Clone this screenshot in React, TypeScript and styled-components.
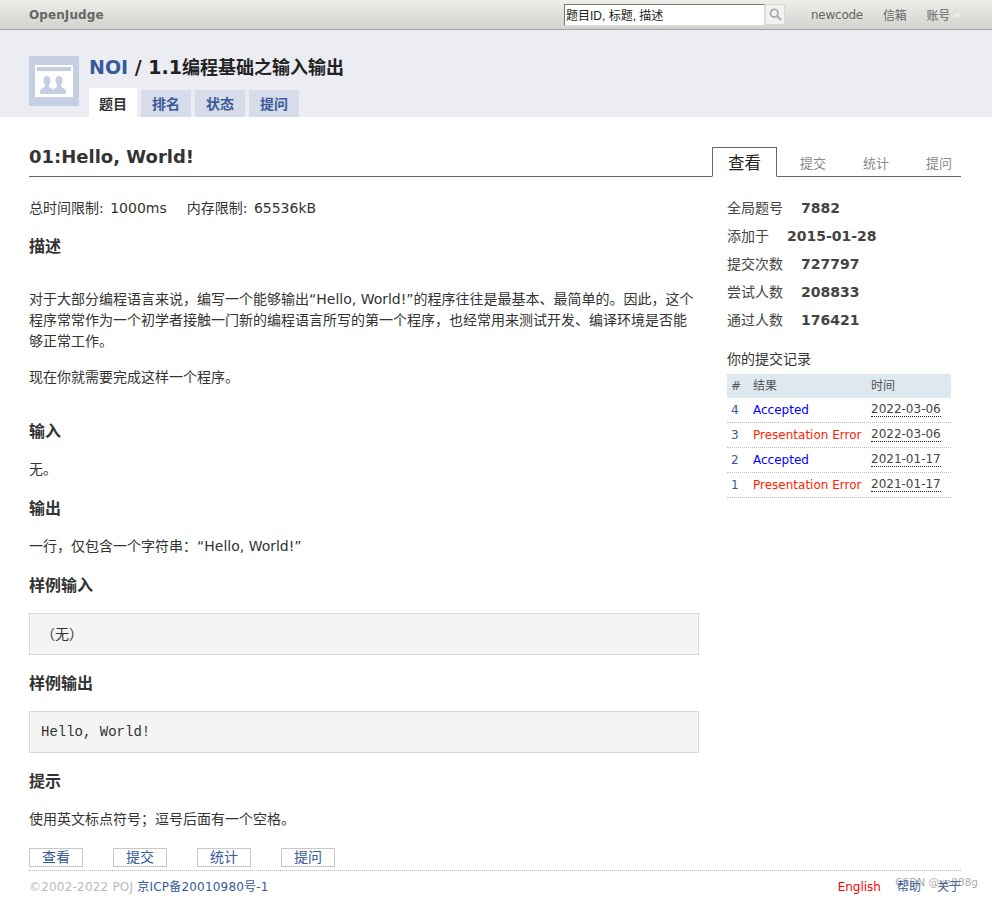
import styled, { createGlobalStyle } from "styled-components"

const GlobalStyle = createGlobalStyle`
  html, body {
    margin: 0;
    padding: 0;
    background: #fff;
  }
  body {
    font-family: "DejaVu Sans", "Noto Sans CJK SC", sans-serif;
    font-size: 14px;
    color: #333;
  }
  a {
    text-decoration: none;
  }
`

const Page = styled.div`
  position: relative;
  width: 992px;
  height: 898px;
  overflow: hidden;
`

const TopBar = styled.div`
  box-sizing: border-box;
  height: 30px;
  padding-left: 29px;
  display: flex;
  align-items: center;
  background: linear-gradient(#efefea, #d2d2ce);
  border-bottom: 1px solid #a3a3a3;
`

const Brand = styled.a`
  font-size: 12px;
  font-weight: bold;
  letter-spacing: 0.1px;
  color: #666;
  width: 535px;
`

const SearchInput = styled.div`
  box-sizing: border-box;
  width: 201px;
  height: 22px;
  line-height: 23px;
  padding-left: 1px;
  background: #fff;
  border: 1px solid #777;
  border-right-color: #ddd;
  border-bottom-color: #ddd;
  color: #222;
  font-family: "Liberation Sans", "Noto Sans CJK SC", sans-serif;
  font-size: 12px;
  white-space: nowrap;
  overflow: hidden;
`

const SearchButton = styled.div`
  box-sizing: border-box;
  width: 20px;
  height: 21px;
  display: flex;
  align-items: center;
  justify-content: center;
  background: #f2f2f0;
  border: 1px solid #d8d8d8;
  margin-right: 26px;
`

const UserLink = styled.a`
  font-size: 12px;
  letter-spacing: -0.25px;
  color: #666;
  margin-right: 20px;
`

const Caret = styled.span`
  display: inline-block;
  width: 0;
  height: 0;
  margin-left: 3px;
  vertical-align: 2px;
  border-left: 4px solid transparent;
  border-right: 4px solid transparent;
  border-top: 4px solid #eee;
`

const Banner = styled.div`
  box-sizing: border-box;
  height: 87px;
  padding: 26px 0 0 29px;
  display: flex;
  gap: 10px;
  background: #ecedf3;
`

const GroupIcon = styled.svg`
  width: 50px;
  height: 50px;
  flex: none;
`

const BannerMain = styled.div`
  display: flex;
  flex-direction: column;
`

const BannerTitle = styled.h2`
  margin: 0;
  height: 32px;
  line-height: 23px;
  font-size: 18px;
  font-weight: bold;
  color: #222;
  a {
    color: #375a9a;
  }
  span {
    font-size: 19px;
  }
`

const NavTabs = styled.div`
  display: flex;
  align-items: flex-end;
  gap: 4px;
`

const NavTab = styled.a<{ $active?: boolean }>`
  height: ${(p) => (p.$active ? 29 : 27)}px;
  line-height: ${(p) => (p.$active ? 33 : 29)}px;
  width: ${(p) => (p.$active ? 48 : 50)}px;
  text-align: center;
  font-size: 14px;
  font-weight: bold;
  color: ${(p) => (p.$active ? "#333" : "#3d5a9a")};
  background: ${(p) => (p.$active ? "#fff" : "#d6dce9")};
`

const TitleRow = styled.div`
  box-sizing: border-box;
  height: 60px;
  margin: 0 31px 0 29px;
  padding-top: 30px;
  display: flex;
  align-items: flex-end;
  justify-content: space-between;
  border-bottom: 1px solid #666;
`

const ProblemTitle = styled.h1`
  margin: 0;
  align-self: flex-start;
  margin-top: -2px;
  line-height: 24px;
  font-size: 18px;
  font-weight: bold;
  color: #333;
`

const PageTabs = styled.div`
  display: flex;
  align-items: flex-end;
  gap: 19px;
  margin-bottom: -1px;
`

const PageTab = styled.a<{ $active?: boolean }>`
  box-sizing: border-box;
  height: 30px;
  text-align: center;
  width: ${(p) => (p.$active ? "65px" : "44px")};
  margin-right: ${(p) => (p.$active ? "-5px" : "0")};
  font-size: ${(p) => (p.$active ? "16.5px" : "13px")};
  line-height: ${(p) => (p.$active ? "32px" : "33px")};
  color: ${(p) => (p.$active ? "#222" : "#888")};
  background: ${(p) => (p.$active ? "#fff" : "transparent")};
  border: ${(p) => (p.$active ? "1px solid #666" : "none")};
  border-bottom: ${(p) => (p.$active ? "1px solid #fff" : "none")};
`

const Columns = styled.div`
  display: flex;
  padding-left: 29px;
`

const MainColumn = styled.div`
  width: 670px;
  flex: none;
`

const Limits = styled.div`
  display: flex;
  gap: 20px;
  margin-top: 22px;
  line-height: 18px;
  word-spacing: 2px;
`

const SectionTitle = styled.h3<{ $top: number; $bottom: number }>`
  margin: ${(p) => p.$top}px 0 ${(p) => p.$bottom}px;
  line-height: 24px;
  font-size: 16px;
  font-weight: bold;
  color: #333;
`

const Paragraph = styled.p<{ $top?: number }>`
  margin: ${(p) => p.$top ?? 0}px 0 0;
  line-height: 21px;
  color: #333;
`

const SampleBox = styled.div<{ $mono?: boolean }>`
  box-sizing: border-box;
  height: 42px;
  padding: 0 11px;
  line-height: 40px;
  background: #f4f4f4;
  border: 1px solid #d9d9d9;
  color: #333;
  font-family: ${(p) =>
    p.$mono ? '"Liberation Mono", monospace' : "inherit"};
  font-size: 14px;
`

const BottomActions = styled.div`
  display: flex;
  gap: 30px;
  margin-top: 18px;
`

const ActionButton = styled.a`
  box-sizing: border-box;
  width: 54px;
  height: 19px;
  line-height: 17px;
  text-align: center;
  font-size: 14px;
  color: #375a9a;
  border: 1px solid #c8c8c8;
`

const SideColumn = styled.div`
  width: 224px;
  margin-left: 28px;
  padding-top: 17px;
`

const Fact = styled.div`
  display: flex;
  gap: 18px;
  height: 28px;
  line-height: 28px;
  color: #444;
`

const FactValue = styled.b`
  font-size: 14px;
  color: #444;
`

const RecordsTitle = styled.div`
  margin-top: 15px;
  line-height: 20px;
  color: #333;
`

const RecordsTable = styled.div`
  margin-top: 5px;
  font-size: 12px;
`

const RecordRow = styled.div<{ $head?: boolean }>`
  display: grid;
  grid-template-columns: 22px 118px 80px;
  height: ${(p) => (p.$head ? "24px" : "25px")};
  box-sizing: border-box;
  line-height: 24px;
  padding-left: 4px;
  background: ${(p) => (p.$head ? "#dee8ef" : "transparent")};
  color: ${(p) => (p.$head ? "#555" : "#375a9a")};
  border-bottom: ${(p) => (p.$head ? "none" : "1px dotted #bbb")};
`

const Verdict = styled.a<{ $ok: boolean }>`
  color: ${(p) => (p.$ok ? "#0000ff" : "#ff2200")};
  white-space: nowrap;
`

const DateText = styled.span`
  justify-self: start;
  height: 14px;
  line-height: 14px;
  margin-top: 4px;
  color: #444;
  border-bottom: 1px dotted #222;
`

const Footer = styled.div`
  box-sizing: border-box;
  margin: 3px 31px 0 29px;
  height: 28px;
  display: flex;
  justify-content: space-between;
  line-height: 32px;
  font-size: 12px;
  color: #bbb;
  border-top: 1px dotted #bbb;
`

const Copyright = styled.span`
  letter-spacing: 0.2px;
`

const FooterLink = styled.a<{ $red?: boolean }>`
  color: ${(p) => (p.$red ? "#f00" : "#375a9a")};
`

const FooterLinks = styled.span`
  display: flex;
  gap: 16px;
`

const Watermark = styled.div`
  position: absolute;
  right: 14px;
  bottom: 9px;
  font-size: 10.5px;
  line-height: 14px;
  color: rgba(120, 120, 120, 0.65);
`

const facts = [
  { label: "全局题号", value: "7882" },
  { label: "添加于", value: "2015-01-28" },
  { label: "提交次数", value: "727797" },
  { label: "尝试人数", value: "208833" },
  { label: "通过人数", value: "176421" },
]

const records = [
  { id: 4, result: "Accepted", date: "2022-03-06" },
  { id: 3, result: "Presentation Error", date: "2022-03-06" },
  { id: 2, result: "Accepted", date: "2021-01-17" },
  { id: 1, result: "Presentation Error", date: "2021-01-17" },
]

export default function App() {
  return (
    <Page>
      <GlobalStyle />
      <TopBar>
        <Brand>OpenJudge</Brand>
        <SearchInput>题目ID, 标题, 描述</SearchInput>
        <SearchButton>
          <svg width="13" height="13" viewBox="0 0 13 13" fill="none">
            <circle cx="5.2" cy="5.2" r="3.8" stroke="#aaa" strokeWidth="1.8" />
            <path d="M8 8l4 4" stroke="#aaa" strokeWidth="2.2" />
          </svg>
        </SearchButton>
        <UserLink>newcode</UserLink>
        <UserLink>信箱</UserLink>
        <UserLink>
          账号
          <Caret />
        </UserLink>
      </TopBar>
      <Banner>
        <GroupIcon viewBox="0 0 50 50">
          <rect width="50" height="50" fill="#c5cfe2" />
          <rect x="6" y="9" width="38" height="32" fill="#fff" />
          <rect x="8" y="11" width="34" height="4" fill="#c5cfe2" />
          <path
            d="M11 38v-3c0-2 4-3 5-4.500v-2c-1-1-1.500-2.500-1.500-4.500 0-2.500 1.500-4 3.500-4s3.500 1.500 3.500 4c0 2-.5 3.500-1.500 4.500v2c1 1.500 3 2 4 3 1-1 3-1.500 4-3v-2c-1-1-1.500-2.500-1.500-4.500 0-2.500 1.500-4 3.500-4s3.500 1.500 3.500 4c0 2-.5 3.500-1.500 4.500v2c1 1.500 5 2.500 5 4.500v3z"
            fill="#c5cfe2"
          />
        </GroupIcon>
        <BannerMain>
          <BannerTitle>
            <span>
              <a>NOI</a> / 1.1
            </span>
            编程基础之输入输出
          </BannerTitle>
          <NavTabs>
            <NavTab $active>题目</NavTab>
            <NavTab>排名</NavTab>
            <NavTab>状态</NavTab>
            <NavTab>提问</NavTab>
          </NavTabs>
        </BannerMain>
      </Banner>
      <TitleRow>
        <ProblemTitle>01:Hello, World!</ProblemTitle>
        <PageTabs>
          <PageTab $active>查看</PageTab>
          <PageTab>提交</PageTab>
          <PageTab>统计</PageTab>
          <PageTab>提问</PageTab>
        </PageTabs>
      </TitleRow>
      <Columns>
        <MainColumn>
          <Limits>
            <span>总时间限制: 1000ms</span>
            <span>内存限制: 65536kB</span>
          </Limits>
          <SectionTitle $top={18} $bottom={30}>
            描述
          </SectionTitle>
          <Paragraph>
            对于大部分编程语言来说，编写一个能够输出“Hello,
            World!”的程序往往是最基本、最简单的。因此，这个程序常常作为一个初学者接触一门新的编程语言所写的第一个程序，也经常用来测试开发、编译环境是否能够正常工作。
          </Paragraph>
          <Paragraph $top={15}>现在你就需要完成这样一个程序。</Paragraph>
          <SectionTitle $top={32} $bottom={15}>
            输入
          </SectionTitle>
          <Paragraph>无。</Paragraph>
          <SectionTitle $top={17} $bottom={15}>
            输出
          </SectionTitle>
          <Paragraph>一行，仅包含一个字符串：“Hello, World!”</Paragraph>
          <SectionTitle $top={17} $bottom={15}>
            样例输入
          </SectionTitle>
          <SampleBox>（无）</SampleBox>
          <SectionTitle $top={17} $bottom={15}>
            样例输出
          </SectionTitle>
          <SampleBox $mono>Hello, World!</SampleBox>
          <SectionTitle $top={17} $bottom={15}>
            提示
          </SectionTitle>
          <Paragraph>使用英文标点符号；逗号后面有一个空格。</Paragraph>
          <BottomActions>
            <ActionButton>查看</ActionButton>
            <ActionButton>提交</ActionButton>
            <ActionButton>统计</ActionButton>
            <ActionButton>提问</ActionButton>
          </BottomActions>
        </MainColumn>
        <SideColumn>
          {facts.map((f) => (
            <Fact key={f.label}>
              <span>{f.label}</span>
              <FactValue>{f.value}</FactValue>
            </Fact>
          ))}
          <RecordsTitle>你的提交记录</RecordsTitle>
          <RecordsTable>
            <RecordRow $head>
              <span>#</span>
              <span>结果</span>
              <span>时间</span>
            </RecordRow>
            {records.map((r) => (
              <RecordRow key={r.id}>
                <span>{r.id}</span>
                <Verdict $ok={r.result === "Accepted"}>{r.result}</Verdict>
                <DateText>{r.date}</DateText>
              </RecordRow>
            ))}
          </RecordsTable>
        </SideColumn>
      </Columns>
      <Footer>
        <Copyright>
          ©2002-2022 POJ <FooterLink>京ICP备20010980号-1</FooterLink>
        </Copyright>
        <FooterLinks>
          <FooterLink $red>English</FooterLink>
          <FooterLink>帮助</FooterLink>
          <FooterLink>关于</FooterLink>
        </FooterLinks>
      </Footer>
      <Watermark>CSDN @xe888g</Watermark>
    </Page>
  )
}
